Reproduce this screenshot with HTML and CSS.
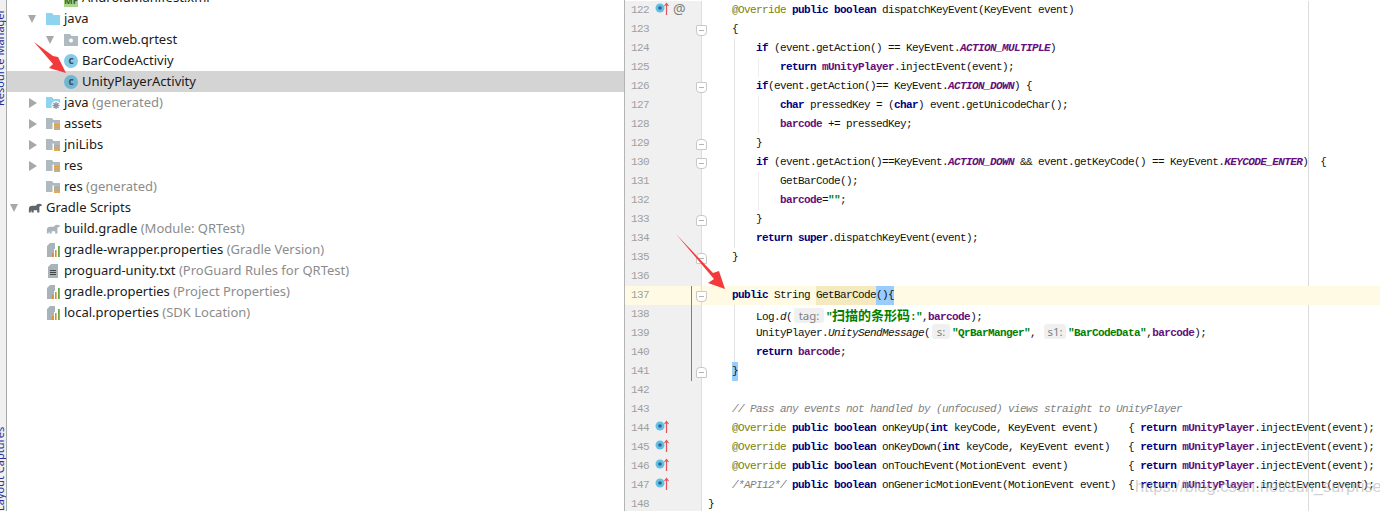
FILE: index.html
```html
<!DOCTYPE html>
<html lang="en">
<head>
<meta charset="utf-8">
<title>UnityPlayerActivity</title>
<link rel="stylesheet" href="styles.css">
</head>
<body>
<svg class="defs" width="0" height="0" aria-hidden="true">
  <symbol id="folder" viewBox="0 0 14 12"><path d="M0 0h6l1.5 2H14v10H0z"/></symbol>
  <symbol id="pkg" viewBox="0 0 14 12"><path fill="#aeb9c0" d="M0 0h6l1.5 2H14v10H0z"/><circle cx="7" cy="6.5" r="2" fill="#fff"/></symbol>
  <symbol id="srcfolder" viewBox="0 0 14 14"><path fill="#aeb9c0" d="M0 1h6l1.500 2H14v9H0z"/><rect x="8" y="7" width="6" height="1.300" fill="#e0a040"/><rect x="8" y="9.300" width="6" height="1.300" fill="#e0a040"/><rect x="8" y="11.600" width="6" height="1.300" fill="#e0a040"/><rect x="6.500" y="5.500" width="1.500" height="8.500" fill="#fff"/></symbol>
  <symbol id="gen" viewBox="0 0 14 14"><path fill="#8fd4ee" d="M0 1h6l1.500 2H14v9H0z"/><circle cx="10" cy="9.500" r="4.500" fill="#fff"/><path stroke="#8a979e" stroke-width="1.300" d="M10 6v7M6.500 9.500h7M7.500 7l5 5M12.500 7l-5 5"/></symbol>
  <symbol id="props" viewBox="0 0 14 14"><path fill="#a9b4ba" d="M4 0h5v6H8v8H1V3z"/><rect x="9" y="7" width="1.600" height="7" fill="#e08a30"/><rect x="6" y="10" width="1.600" height="4" fill="#e08a30"/><rect x="12" y="3" width="1.800" height="11" fill="#6aa84f"/></symbol>
  <symbol id="txt" viewBox="0 0 14 14"><path fill="#a9b4ba" d="M5 0h7v14H2V3z"/><path stroke="#444" d="M4 6.500h6M4 8.500h6M4 10.500h6"/></symbol>
  <symbol id="gradle" viewBox="0 0 16 12"><path d="M1 11V7q0-3.500 4-3.500h4q1-2.500 3.500-2.500T16 2.500q0 1.300-1.500 1.300-1 0-1.500 1V11h-2.500V8.500h-4V11H4V8.800q-1 0-1 2.200z"/></symbol>
  <symbol id="over" viewBox="0 0 14 14"><circle cx="5" cy="6" r="4.500" fill="#62bfe8"/><circle cx="5" cy="6" r="1.800" fill="#39627a"/><path fill="none" stroke="#e0555a" stroke-width="1.200" d="M11.500 13V1.500M9.500 4l2-2.500 2 2.500"/></symbol>
</svg>
<main class="app">
  <div class="strip">
    <span class="strip-label">Resource Manager</span>
    <span class="strip-label">Layout Captures</span>
  </div>
  <section class="tree">
    <div class="row l2"><i class="tw"></i><b class="mf">MF</b><span>AndroidManifest.xml</span></div>
    <div class="row l1"><i class="tw down"></i><svg class="ic fblue"><use href="#folder"/></svg><span>java</span></div>
    <div class="row l2"><i class="tw down"></i><svg class="ic"><use href="#pkg"/></svg><span>com.web.qrtest</span></div>
    <div class="row l3"><i class="cls">c</i><span>BarCodeActiviy</span></div>
    <div class="row l3 sel"><i class="cls">c</i><span>UnityPlayerActivity</span></div>
    <div class="row l1"><i class="tw right"></i><svg class="ic tall"><use href="#gen"/></svg><span>java <em>(generated)</em></span></div>
    <div class="row l1"><i class="tw right"></i><svg class="ic tall"><use href="#srcfolder"/></svg><span>assets</span></div>
    <div class="row l1"><i class="tw right"></i><svg class="ic tall"><use href="#srcfolder"/></svg><span>jniLibs</span></div>
    <div class="row l1"><i class="tw right"></i><svg class="ic tall"><use href="#srcfolder"/></svg><span>res</span></div>
    <div class="row l1"><i class="tw"></i><svg class="ic tall"><use href="#srcfolder"/></svg><span>res <em>(generated)</em></span></div>
    <div class="row l0"><i class="tw down"></i><svg class="ic gdark"><use href="#gradle"/></svg><span>Gradle Scripts</span></div>
    <div class="row l1"><i class="tw"></i><svg class="ic glight"><use href="#gradle"/></svg><span>build.gradle <em>(Module: QRTest)</em></span></div>
    <div class="row l1"><i class="tw"></i><svg class="ic tall"><use href="#props"/></svg><span>gradle-wrapper.properties <em>(Gradle Version)</em></span></div>
    <div class="row l1"><i class="tw"></i><svg class="ic tall"><use href="#txt"/></svg><span>proguard-unity.txt <em>(ProGuard Rules for QRTest)</em></span></div>
    <div class="row l1"><i class="tw"></i><svg class="ic tall"><use href="#props"/></svg><span>gradle.properties <em>(Project Properties)</em></span></div>
    <div class="row l1"><i class="tw"></i><svg class="ic tall"><use href="#props"/></svg><span>local.properties <em>(SDK Location)</em></span></div>
  </section>
  <section class="editor">
    <div class="margin"></div>
    <div class="ln"><div class="gut"><span class="no">122</span><svg class="ov"><use href="#over"/></svg><span class="at">@</span></div><pre class="code">    <u>@Override</u> <b>public boolean</b> dispatchKeyEvent(KeyEvent event)</pre></div>
    <div class="ln"><div class="gut"><span class="no">123</span><i class="fold"></i></div><pre class="code">    {</pre></div>
    <div class="ln g1"><div class="gut"><span class="no">124</span></div><pre class="code">        <b>if</b> (event.getAction() == KeyEvent.<s>ACTION_MULTIPLE</s>)</pre></div>
    <div class="ln g1 g2"><div class="gut"><span class="no">125</span></div><pre class="code">            <b>return</b> <q>mUnityPlayer</q>.injectEvent(event);</pre></div>
    <div class="ln g1"><div class="gut"><span class="no">126</span><i class="fold"></i></div><pre class="code">        <b>if</b>(event.getAction()== KeyEvent.<s>ACTION_DOWN</s>) {</pre></div>
    <div class="ln g1 g2"><div class="gut"><span class="no">127</span></div><pre class="code">            <b>char</b> pressedKey = (<b>char</b>) event.getUnicodeChar();</pre></div>
    <div class="ln g1 g2"><div class="gut"><span class="no">128</span></div><pre class="code">            <q>barcode</q> += pressedKey;</pre></div>
    <div class="ln g1"><div class="gut"><span class="no">129</span><i class="fold end"></i></div><pre class="code">        }</pre></div>
    <div class="ln g1"><div class="gut"><span class="no">130</span><i class="fold"></i></div><pre class="code">        <b>if</b> (event.getAction()==KeyEvent.<s>ACTION_DOWN</s> &amp;&amp; event.getKeyCode() == KeyEvent.<s>KEYCODE_ENTER</s>)  {</pre></div>
    <div class="ln g1 g2"><div class="gut"><span class="no">131</span></div><pre class="code">            GetBarCode();</pre></div>
    <div class="ln g1 g2"><div class="gut"><span class="no">132</span></div><pre class="code">            <q>barcode</q>=<tt>""</tt>;</pre></div>
    <div class="ln g1"><div class="gut"><span class="no">133</span><i class="fold end"></i></div><pre class="code">        }</pre></div>
    <div class="ln g1"><div class="gut"><span class="no">134</span></div><pre class="code">        <b>return super</b>.dispatchKeyEvent(event);</pre></div>
    <div class="ln"><div class="gut"><span class="no">135</span><i class="fold end"></i></div><pre class="code">    }</pre></div>
    <div class="ln"><div class="gut"><span class="no">136</span></div><pre class="code"> </pre></div>
    <div class="ln cur"><div class="gut chg"><span class="no">137</span><i class="fold"></i></div><pre class="code">    <b>public</b> String <mark class="id">GetBarCode</mark><mark class="br">(){</mark></pre></div>
    <div class="ln g1"><div class="gut chg"><span class="no">138</span></div><pre class="code">        Log.<dfn>d</dfn>(<span class="hint w30">tag:</span><tt>"<span class="cjk">扫描的条形码</span>:"</tt>,<q>barcode</q>);</pre></div>
    <div class="ln g1"><div class="gut chg"><span class="no">139</span></div><pre class="code">        UnityPlayer.<dfn>UnitySendMessage</dfn>(<span class="hint w18">s:</span><tt>"QrBarManger"</tt>, <span class="hint w22">s1:</span><tt>"BarCodeData"</tt>,<q>barcode</q>);</pre></div>
    <div class="ln g1"><div class="gut chg"><span class="no">140</span></div><pre class="code">        <b>return</b> <q>barcode</q>;</pre></div>
    <div class="ln"><div class="gut chg"><span class="no">141</span><i class="fold end"></i></div><pre class="code">    <mark class="br">}</mark></pre></div>
    <div class="ln"><div class="gut"><span class="no">142</span></div><pre class="code"> </pre></div>
    <div class="ln"><div class="gut"><span class="no">143</span></div><pre class="code">    <ins>// Pass any events not handled by (unfocused) views straight to UnityPlayer</ins></pre></div>
    <div class="ln"><div class="gut"><span class="no">144</span><svg class="ov"><use href="#over"/></svg></div><pre class="code">    <u>@Override</u> <b>public boolean</b> onKeyUp(<b>int</b> keyCode, KeyEvent event)     { <b>return</b> <q>mUnityPlayer</q>.injectEvent(event); }</pre></div>
    <div class="ln"><div class="gut"><span class="no">145</span><svg class="ov"><use href="#over"/></svg></div><pre class="code">    <u>@Override</u> <b>public boolean</b> onKeyDown(<b>int</b> keyCode, KeyEvent event)   { <b>return</b> <q>mUnityPlayer</q>.injectEvent(event); }</pre></div>
    <div class="ln"><div class="gut"><span class="no">146</span><svg class="ov"><use href="#over"/></svg></div><pre class="code">    <u>@Override</u> <b>public boolean</b> onTouchEvent(MotionEvent event)          { <b>return</b> <q>mUnityPlayer</q>.injectEvent(event); }</pre></div>
    <div class="ln"><div class="gut"><span class="no">147</span><svg class="ov"><use href="#over"/></svg></div><pre class="code">    <ins>/*API12*/</ins> <b>public boolean</b> onGenericMotionEvent(MotionEvent event)  { <b>return</b> <q>mUnityPlayer</q>.injectEvent(event); }</pre></div>
    <div class="ln"><div class="gut"><span class="no">148</span></div><pre class="code">}</pre></div>
  </section>
</main>
<svg class="annot" width="1380" height="511" aria-hidden="true">
  <polygon fill="#f23a3c" points="34,42 53,56 58,57 66,73 49,68 53,64"/>
  <polygon fill="#f23a3c" points="676,234 713,273 719,271 725,289 708,283 714,279"/>
</svg>
<div class="watermark">https://blog.csdn.net/sun_surprise</div>
</body>
</html>
```
FILE: styles.css
```css
* { box-sizing: border-box; }
html, body { margin: 0; height: 100%; overflow: hidden; background: #fff; }
.defs { position: absolute; }
.app { display: flex; height: 511px; width: 1380px; overflow: hidden; }

/* left tool strip */
.strip {
  width: 7px; flex: none; background: #f0f0f0; border-right: 1px solid #a8a8a8;
  display: flex; flex-direction: column; justify-content: space-between;
  padding: 14px 0 0; overflow: hidden;
}
.strip-label {
  writing-mode: vertical-rl; transform: rotate(180deg);
  font: 11px/11px "Noto Sans", sans-serif; color: #22309a; margin-left: -6px;
  white-space: nowrap; height: 92px;
}

/* project tree */
.tree {
  width: 618px; flex: none; margin-top: -13px; border-right: 1px solid #b4b4b4;
  font: 13px/21px "Noto Sans", sans-serif; color: #1a1a1a;
}
.row { display: flex; align-items: center; height: 21px; white-space: nowrap; }
.row em { font-style: normal; color: #8c8c8c; }
.l0 { padding-left: 3px; }
.l1 { padding-left: 21px; }
.l2 { padding-left: 39px; }
.l3 { padding-left: 57px; }
.sel { background: #d4d4d4; }
.tw { flex: none; width: 18px; height: 10px; position: relative; }
.tw.down::before {
  content: ""; position: absolute; left: 0; top: 1px;
  border-left: 4.5px solid transparent; border-right: 4.5px solid transparent; border-top: 8px solid #a8a8a8;
}
.tw.right::before {
  content: ""; position: absolute; left: 1px; top: 0;
  border-top: 5px solid transparent; border-bottom: 5px solid transparent; border-left: 8px solid #a8a8a8;
}
.ic { flex: none; width: 14px; height: 12px; margin-right: 4px; }
.ic.tall { height: 14px; }
.fblue { fill: #8fd4ee; }
.gdark { fill: #5f6568; }
.glight { fill: #aab4ba; }
.mf {
  flex: none; width: 14px; height: 13px; margin-right: 4px; margin-top: 6px;
  background: #a8d68c; color: #3d5a2c; font: bold 9px/13px "Noto Sans", sans-serif; text-align: center;
}
.cls {
  flex: none; width: 14px; height: 14px; margin-right: 4px; border-radius: 50%;
  background: #86cbe8; color: #35505e; font: bold 10px/13px "Noto Sans", sans-serif; text-align: center;
}
.sel .cls { background: #6fb7d2; }

/* editor */
.editor { flex: 1; min-width: 0; position: relative; margin-top: 1px; overflow: hidden; }
.margin { position: absolute; left: 683px; top: 0; bottom: 0; width: 1px; background: #dcdcdc; }
.ln { display: flex; height: 19px; position: relative; }
.gut {
  flex: none; width: 77px; height: 19px; background: #f0f0f0; border-right: 1px solid #dedede;
  display: flex; align-items: center; position: relative;
  font: 11px/19px "Liberation Mono", monospace; letter-spacing: -.6px; color: #a0a0a0;
}
.no { width: 30px; padding-left: 6px; flex: none; }
.ov { width: 14px; height: 14px; flex: none; margin-top: -3px; }
.at { margin-left: 4px; font: 14px/14px "Noto Sans", sans-serif; letter-spacing: 0; color: #808080; margin-top: -4px; }
.chg::after { content: ""; position: absolute; left: 66px; top: 0; bottom: 0; width: 1px; background: #5b87b5; }
.fold {
  position: absolute; left: 71px; top: 5px; width: 11px; height: 11px; z-index: 1;
  background: #fff; border: 1px solid #c8c8c8; border-radius: 1px 1px 4px 4px;
}
.fold::after { content: ""; position: absolute; left: 2px; right: 2px; top: 4px; height: 1px; background: #b4b4b4; }
.fold.end { border-radius: 4px 4px 1px 1px; }
.cur, .cur .gut { background: #fffae3; }
.code {
  margin: 0; flex: 1; padding-left: 6px; overflow: hidden; white-space: pre;
  font: 11px/19px "Liberation Mono", "Noto Sans CJK SC", monospace; letter-spacing: -.6px; color: #111;
}
.g1 .code { background: linear-gradient(#e4e4e4, #e4e4e4) 32px 0 / 1px 100% no-repeat; }
.g1.g2 .code { background: linear-gradient(#e4e4e4, #e4e4e4) 32px 0 / 1px 100% no-repeat, linear-gradient(#eee, #eee) 56px 0 / 1px 100% no-repeat; }
.code b { color: #000080; font-weight: bold; }
.code q { quotes: none; color: #660e7a; font-weight: bold; }
.code s { text-decoration: none; color: #660e7a; font-weight: bold; font-style: italic; }
.code u { text-decoration: none; color: #808000; }
.code tt { font: inherit; color: #008000; font-weight: bold; }
.code dfn { font-style: italic; }
.code ins { text-decoration: none; color: #808080; font-style: italic; }
.code mark { color: inherit; display: inline-block; height: 19px; }
.id { background: #f5eabf; }
.br { background: #99ccff; }
.cjk { font: bold 13px/19px "Noto Sans CJK SC", sans-serif; letter-spacing: 0; }
.hint {
  display: inline-block; height: 15px; margin: 0 2px; vertical-align: 0; border-radius: 3px;
  background: #f0f0f0; color: #808080; font: 11.5px/15px "Noto Sans", sans-serif; letter-spacing: 0; text-align: center;
}
.w30 { width: 30px; }
.w18 { width: 18px; }
.w22 { width: 22px; }

/* annotations over the screenshot */
.annot { position: absolute; left: 0; top: 0; z-index: 5; pointer-events: none; }
.watermark {
  position: absolute; left: 1135px; top: 476px; z-index: 6;
  font: 16.5px/20px "Liberation Sans", sans-serif; color: rgba(170,170,170,.55); white-space: nowrap;
}
```
